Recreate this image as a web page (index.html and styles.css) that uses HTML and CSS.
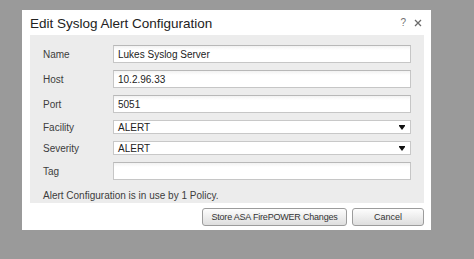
FILE: index.html
```html
<!DOCTYPE html>
<html lang="en">
<head>
    <meta charset="UTF-8">
    <title>Edit Syslog Alert Configuration</title>
    <link rel="stylesheet" href="styles.css">
</head>
<body>
    <div class="dialog">
        <div class="dialog-head">
            <h1>Edit Syslog Alert Configuration</h1>
            <span class="help">?</span>
            <svg class="close" width="8" height="8" viewBox="0 0 8 8">
                <path d="M1 1 L7 7 M7 1 L1 7" stroke="#6a6a6a" stroke-width="1.3" fill="none"/>
            </svg>
        </div>

        <!-- Form panel -->
        <div class="panel">
            <div class="form">
                <label>Name</label>
                <div class="field">Lukes Syslog Server</div>

                <label>Host</label>
                <div class="field">10.2.96.33</div>

                <label>Port</label>
                <div class="field">5051</div>

                <label>Facility</label>
                <div class="select">ALERT
                    <svg class="arrow" width="6" height="5" viewBox="0 0 6 5"><path d="M0 0 H6 V1 L3 5 L0 1 Z" fill="#111"/></svg>
                </div>

                <label>Severity</label>
                <div class="select">ALERT
                    <svg class="arrow" width="6" height="5" viewBox="0 0 6 5"><path d="M0 0 H6 V1 L3 5 L0 1 Z" fill="#111"/></svg>
                </div>

                <label>Tag</label>
                <div class="field"></div>
            </div>
            <p class="note">Alert Configuration is in use by 1 Policy.</p>
        </div>

        <div class="actions">
            <button class="btn store">Store ASA FirePOWER Changes</button>
            <button class="btn cancel">Cancel</button>
        </div>
    </div>
</body>
</html>
```

FILE: styles.css
```css
body {
    margin: 0;
    padding: 10px 0 0 22px;
    background-color: #9a9a9a;
    font-family: 'Liberation Sans', Arial, sans-serif;
    color: #333;
    height: 249px;
    overflow: hidden;
}
.dialog {
    width: 409px;
    height: 220px;
    background-color: #fff;
    box-sizing: border-box;
    padding: 0 7px 0 8px;
}
.dialog-head {
    display: flex;
    align-items: center;
    height: 25px;
}
.dialog-head h1 {
    flex: 1;
    margin: 0;
    padding-top: 1px;
    font-size: 13.5px;
    font-weight: normal;
    color: #222;
}
.help {
    font-size: 10px;
    color: #707070;
    margin-right: 8px;
}
.close {
    margin-right: 2px;
}
.panel {
    background-color: #ececec;
    padding: 10px 13px 0 13px;
    height: 168px;
    box-sizing: border-box;
}
.form {
    display: grid;
    grid-template-columns: 70px 1fr;
    row-gap: 7px;
    align-items: center;
}
.form label {
    font-size: 10px;
    color: #3c3c3c;
}
.field, .select {
    font-size: 10px;
    color: #222;
    background: linear-gradient(#f2f2f2, #fff 4px);
    border: 1px solid #c6c6c6;
    border-top-color: #b8b8b8;
    box-sizing: border-box;
    padding-left: 4px;
    display: flex;
    align-items: center;
}
.field {
    height: 18px;
}
.select {
    height: 14px;
    background: #fff;
    border-color: #c8c8c8;
}
.arrow {
    margin-left: auto;
    margin-right: 5px;
}
.note {
    margin: 9px 0 0;
    font-size: 10px;
    line-height: 14px;
    color: #3c3c3c;
}
.actions {
    display: flex;
    justify-content: flex-end;
    gap: 5px;
    padding-top: 5px;
}
.btn {
    height: 18px;
    font-family: 'Liberation Sans', Arial, sans-serif;
    font-size: 9px;
    color: #333;
    background: linear-gradient(#fdfdfd, #dedede);
    border: 1px solid #9c9c9c;
    border-radius: 3px;
    padding: 0;
}
.store {
    width: 145px;
    letter-spacing: -0.2px;
}
.cancel {
    width: 72px;
}
```
